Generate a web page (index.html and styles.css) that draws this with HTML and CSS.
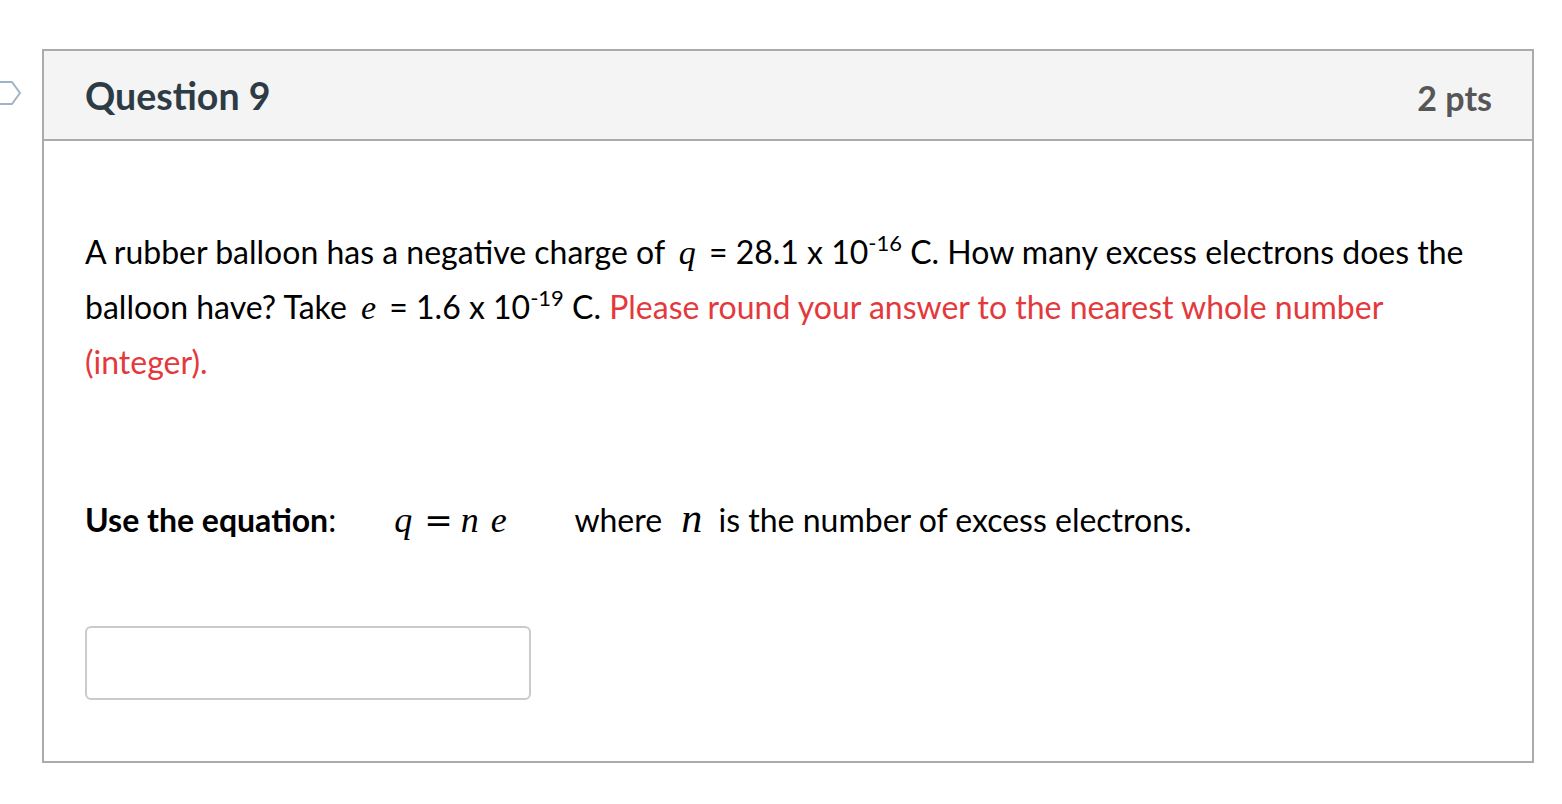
FILE: index.html
```html
<!DOCTYPE html>
<html>
<head>
<meta charset="utf-8">
<link rel="stylesheet" href="styles.css">
</head>
<body>
<div class="page">
  <div class="flag-col">
    <svg class="flag" width="24" height="30" viewBox="0 0 24 30">
      <path d="M-4 3 H12 L20 14 L12 25 H-4" fill="none" stroke="#9fb3c6" stroke-width="2" stroke-linejoin="round"/>
    </svg>
  </div>
  <div class="card">
    <div class="card-header">
      <h2 class="q-title">Question 9</h2>
      <span class="q-pts">2 pts</span>
    </div>
    <div class="card-body">
      <p class="q-text">A rubber balloon has a negative charge of <span class="mvar">q</span> = 28.1 x 10<sup>-16</sup> C. How many excess electrons does the balloon have? Take <span class="mvar">e</span> = 1.6 x 10<sup>-19</sup> C. <span class="red">Please round your answer to the nearest whole number (integer).</span></p>
      <p class="q-eq"><strong>Use the equation</strong>: <span class="eq"><span class="mi">q</span><span class="mo">=</span><span class="mi">n</span><span class="mi e">e</span></span> where <span class="mvar big">n</span> is the number of excess electrons.</p>
      <div class="answer"></div>
    </div>
  </div>
</div>
</body>
</html>
```

FILE: styles.css
```css
html, body {
  margin: 0;
  padding: 0;
  background: #ffffff;
}
body {
  font-family: Lato, "Noto Sans", sans-serif;
  color: #000;
}
.page {
  display: flex;
  padding-top: 49px;
}
.flag-col {
  width: 42px;
  flex: 0 0 42px;
  position: relative;
}
.flag {
  position: absolute;
  left: 0;
  top: 30px;
}
.card {
  width: 1492px;
  box-sizing: border-box;
  border: 2px solid #ababab;
}
.card-header {
  background: #f4f4f4;
  border-bottom: 2px solid #ababab;
  height: 88px;
  display: flex;
  align-items: center;
  justify-content: space-between;
  padding: 0 40px 0 41px;
}
.q-title {
  margin: 0;
  font-size: 37.5px;
  font-weight: 700;
  color: #2d3b45;
}
.q-pts {
  font-size: 34px;
  font-weight: 700;
  color: #565656;
  padding-top: 4px;
}
.card-body {
  padding: 84px 41px 61px 41px;
}
.q-text {
  margin: 0;
  font-size: 32px;
  line-height: 54px;
}
.q-text sup {
  font-size: 22px;
  line-height: 0;
  vertical-align: 13px;
}
.mvar {
  font-family: "Liberation Serif", "Times New Roman", serif;
  font-style: italic;
  font-size: 34px;
  padding: 0 5px 0 6px;
}
.mvar.big {
  font-size: 42px;
  padding: 0 8px 0 11px;
}
.red {
  color: #e4393c;
}
.q-eq {
  margin: 102px 0 0 0;
  font-size: 32px;
  line-height: 54px;
}
.q-eq strong {
  font-weight: 700;
}
.eq {
  display: inline-block;
  margin: 0 60px 0 50px;
  font-family: "Liberation Serif", "Times New Roman", serif;
  font-size: 36px;
}
.eq .mi {
  font-style: italic;
}
.eq .mo {
  font-family: "DejaVu Serif", serif;
  font-size: 34px;
  padding: 0 8px 0 12px;
}
.eq .e {
  padding-left: 12px;
}
.answer {
  margin-top: 79px;
  width: 446px;
  height: 74px;
  box-sizing: border-box;
  border: 2px solid #cbcbcb;
  border-radius: 6px;
}
```
